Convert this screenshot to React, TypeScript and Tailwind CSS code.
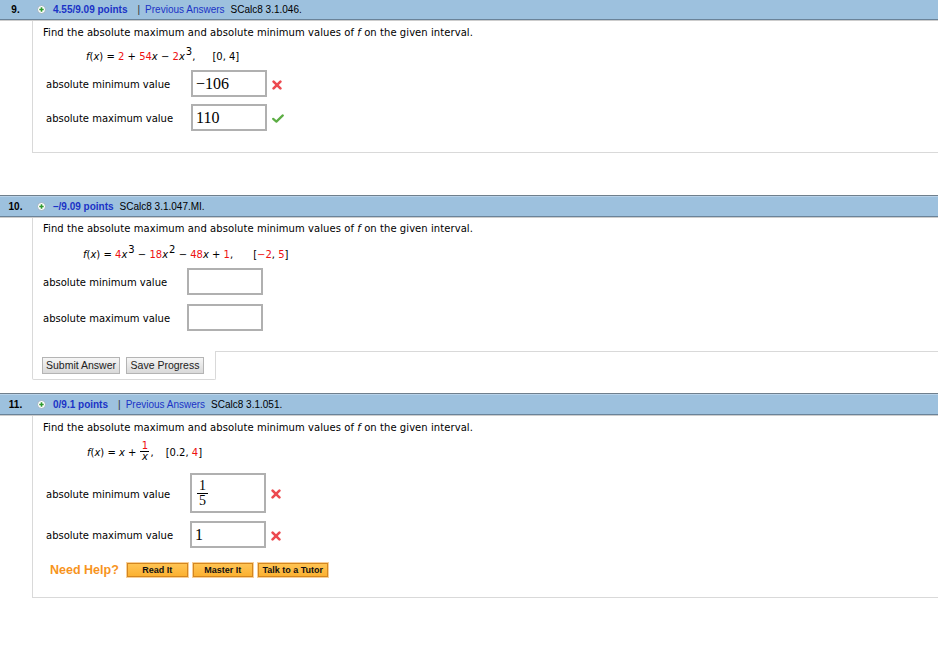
import React from "react";

const SANS = "font-['Liberation_Sans',Arial,sans-serif]";
const BODY = "font-['DejaVu_Sans',Verdana,sans-serif] text-[10px] text-black";

function Plus() {
  return (
    <svg width="9" height="9" viewBox="0 0 9 9" className="shrink-0">
      <circle cx="4.5" cy="4.5" r="4" fill="#ffffff" stroke="#8fa6b8" strokeWidth="0.8" />
      <path d="M4.5 2.3 V6.7 M2.3 4.5 H6.7" stroke="#2f9a2f" strokeWidth="1.6" />
    </svg>
  );
}

function XMark() {
  return (
    <svg width="10" height="10" viewBox="0 0 10 10" className="shrink-0">
      <path d="M1.6 1.6 L8.4 8.4 M8.4 1.6 L1.6 8.4" stroke="#ec4a50" strokeWidth="2.6" strokeLinecap="round" />
    </svg>
  );
}

function Check() {
  return (
    <svg width="12" height="9" viewBox="0 0 12 9" className="shrink-0">
      <path d="M1.2 4.8 L4.4 7.6 L10.8 1.4" stroke="#5cad44" strokeWidth="2.2" fill="none" strokeLinecap="round" strokeLinejoin="round" />
    </svg>
  );
}

function Header({
  num,
  points,
  prev,
  code,
  className = "",
}: {
  num: string;
  points: string;
  prev: boolean;
  code: string;
  className?: string;
}) {
  return (
    <div
      className={`relative z-10 border-t border-b border-t-[#6f7f8c] border-b-[#6a8399] bg-[#9dc1de] shadow-[0_1px_0_#cdcdcd] ${className}`}
    >
      <div className={`h-[20px] border-t border-[#b8d2e9] flex items-center ${SANS} text-[10px] text-black`}>
        <span className="w-[31px] text-center font-bold">{num}</span>
        <span className="ml-[6px] flex items-center">
          <Plus />
        </span>
        <span className="ml-[7px] font-bold text-[#1b33c6]">{points}</span>
        {prev && (
          <>
            <span className="ml-[10px] text-[#333]">|</span>
            <span className="ml-[5px] text-[#1b33c6]">Previous Answers</span>
          </>
        )}
        <span className="ml-[6px]">{code}</span>
      </div>
    </div>
  );
}

function Input({ children, h = "h-[27px]" }: { children?: React.ReactNode; h?: string }) {
  return (
    <div
      className={`w-[76px] ${h} border-2 border-[#b0b0b0] bg-white flex items-center pl-[3px] font-['Liberation_Serif','Times_New_Roman',serif] text-[16px] leading-none text-black`}
    >
      {children}
    </div>
  );
}

function Row({
  label,
  col,
  pl,
  children,
  icon,
  className = "",
}: {
  label: string;
  col: string;
  pl: string;
  children: React.ReactNode;
  icon?: React.ReactNode;
  className?: string;
}) {
  return (
    <div className={`flex items-center ${pl} ${className}`}>
      <span className={`${col} shrink-0 pt-[2px]`}>{label}</span>
      {children}
      {icon && <span className="ml-[5px] pt-[2px] flex items-center">{icon}</span>}
    </div>
  );
}

const R = ({ children }: { children: React.ReactNode }) => <span className="text-[#ee1111]">{children}</span>;
const I = ({ children }: { children: React.ReactNode }) => <span className="italic">{children}</span>;

function GrayButton({ children, w }: { children: React.ReactNode; w: string }) {
  return (
    <div
      className={`${w} h-[17px] border border-[#b4b4b4] bg-gradient-to-b from-[#f6f6f6] to-[#d9d9d9] flex items-center justify-center ${SANS} text-[10.5px] text-[#222]`}
    >
      {children}
    </div>
  );
}

function OrangeButton({ children, w }: { children: React.ReactNode; w: string }) {
  return (
    <div className={`${w} h-[16px] border border-[#f7cf98] bg-[#f7cf98]`}>
      <div
        className={`h-full border border-[#d4861f] bg-gradient-to-b from-[#ffc453] to-[#fbb130] flex items-center justify-center ${SANS} text-[9px] font-bold text-[#111]`}
      >
        {children}
      </div>
    </div>
  );
}

const FIND = (
  <span className="tracking-[0.07px]">
    Find the absolute maximum and absolute minimum values of <I>f</I> on the given interval.
  </span>
);

export default function App() {
  return (
    <div className={`w-[938px] h-[651px] overflow-hidden bg-white ${BODY}`}>
      {/* Question 9 */}
      <Header num="9." points="4.55/9.09 points" prev code="SCalc8 3.1.046." className="mt-[-2px]" />
      <div className="ml-[32px] border-l border-b border-[#d9d9d9] pt-[6px] pb-[21px]">
        <div className="pl-[10px] h-[14px] leading-[14px]">{FIND}</div>
        <div className="pl-[53px] mt-[9px] h-[16px] leading-[16px] whitespace-nowrap">
          <I>f</I>(<I>x</I>) = <R>2</R> + <R>54</R>
          <I>x</I> − <R>2</R>
          <I>x</I>
          <sup className="text-[10px] -top-[5px] ml-[1px]">3</sup>,<span className="ml-[17px]">[0, 4]</span>
        </div>
        <Row label="absolute minimum value" col="w-[145px]" pl="pl-[13px]" className="mt-[5px]" icon={<XMark />}>
          <Input>−106</Input>
        </Row>
        <Row label="absolute maximum value" col="w-[145px]" pl="pl-[13px]" className="mt-[7px]" icon={<Check />}>
          <Input>110</Input>
        </Row>
      </div>

      {/* Question 10 */}
      <Header num="10." points="–/9.09 points" prev={false} code="SCalc8 3.1.047.MI." className="mt-[42px]" />
      <div className="ml-[32px]">
        <div className="border-l border-[#d9d9d9] pt-[5px] pb-[20px]">
          <div className="pl-[10px] h-[14px] leading-[14px]">{FIND}</div>
          <div className="pl-[50px] mt-[11px] h-[16px] leading-[16px] whitespace-nowrap">
            <I>f</I>(<I>x</I>) = <R>4</R>
            <I>x</I>
            <sup className="text-[10px] -top-[5px] ml-[1px]">3</sup> − <R>18</R>
            <I>x</I>
            <sup className="text-[10px] -top-[5px] ml-[1px]">2</sup> − <R>48</R>
            <I>x</I> + <R>1</R>,
            <span className="ml-[20px]">
              [<R>−2</R>, <R>5</R>]
            </span>
          </div>
          <Row label="absolute minimum value" col="w-[144px]" pl="pl-[10px]" className="mt-[5px]">
            <Input />
          </Row>
          <Row label="absolute maximum value" col="w-[144px]" pl="pl-[10px]" className="mt-[9px]">
            <Input />
          </Row>
        </div>
        <div className="flex items-start">
          <div className="w-[184px] h-[29px] border-l border-b border-r border-[#d9d9d9] rounded-b-[2px] flex items-start pt-[6px] pl-[9px] gap-[6px]">
            <GrayButton w="w-[78px]">Submit Answer</GrayButton>
            <GrayButton w="w-[78px]">Save Progress</GrayButton>
          </div>
          <div className="flex-1 border-t border-[#d9d9d9]" />
        </div>
      </div>

      {/* Question 11 */}
      <Header num="11." points="0/9.1 points" prev code="SCalc8 3.1.051." className="mt-[13px]" />
      <div className="ml-[32px] border-l border-b border-[#d9d9d9] pt-[6px] pb-[17px]">
        <div className="pl-[10px] h-[14px] leading-[14px]">{FIND}</div>
        <div className="pl-[54px] mt-[6px] h-[22px] flex items-center whitespace-nowrap">
          <span>
            <I>f</I>(<I>x</I>) = <I>x</I> +
          </span>
          <span className="inline-flex flex-col items-center ml-[4px] mr-[1px] leading-none -mt-[2px]">
            <span className="text-[10px] text-[#ee1111] leading-[9px]">1</span>
            <span className="w-[9px] border-t border-black mt-[1px]" />
            <span className="italic text-[10px] leading-[9px]">x</span>
          </span>
          <span>,</span>
          <span className="ml-[12px]">
            [0.2, <R>4</R>]
          </span>
        </div>
        <Row label="absolute minimum value" col="w-[144px]" pl="pl-[13px]" className="mt-[10px]" icon={<XMark />}>
          <Input h="h-[40px]">
            <span className="inline-flex flex-col items-center ml-[2px] text-[14px] leading-none">
              <span className="leading-[12px]">1</span>
              <span className="w-[11px] border-t border-black my-[1px]" />
              <span className="leading-[12px]">5</span>
            </span>
          </Input>
        </Row>
        <Row label="absolute maximum value" col="w-[144px]" pl="pl-[13px]" className="mt-[8px]" icon={<XMark />}>
          <Input>1</Input>
        </Row>
        <div className="flex items-center pl-[17px] mt-[13px]">
          <span className={`${SANS} text-[12.5px] font-bold text-[#f7941d]`}>Need Help?</span>
          <div className="ml-[7px] flex gap-[3px]">
            <OrangeButton w="w-[63px]">Read It</OrangeButton>
            <OrangeButton w="w-[62px]">Master It</OrangeButton>
            <OrangeButton w="w-[72px]">Talk to a Tutor</OrangeButton>
          </div>
        </div>
      </div>
    </div>
  );
}
